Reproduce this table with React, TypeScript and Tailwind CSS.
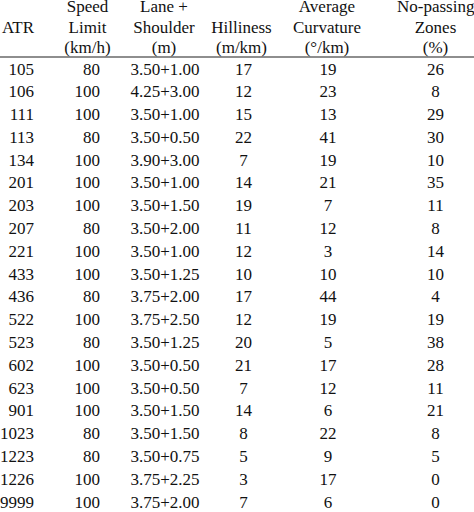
import React from 'react';

type Row = [string, string, string, string, string, string];

const rows: Row[] = [
  ['105', '80', '3.50+1.00', '17', '19', '26'],
  ['106', '100', '4.25+3.00', '12', '23', '8'],
  ['111', '100', '3.50+1.00', '15', '13', '29'],
  ['113', '80', '3.50+0.50', '22', '41', '30'],
  ['134', '100', '3.90+3.00', '7', '19', '10'],
  ['201', '100', '3.50+1.00', '14', '21', '35'],
  ['203', '100', '3.50+1.50', '19', '7', '11'],
  ['207', '80', '3.50+2.00', '11', '12', '8'],
  ['221', '100', '3.50+1.00', '12', '3', '14'],
  ['433', '100', '3.50+1.25', '10', '10', '10'],
  ['436', '80', '3.75+2.00', '17', '44', '4'],
  ['522', '100', '3.75+2.50', '12', '19', '19'],
  ['523', '80', '3.50+1.25', '20', '5', '38'],
  ['602', '100', '3.50+0.50', '21', '17', '28'],
  ['623', '100', '3.50+0.50', '7', '12', '11'],
  ['901', '100', '3.50+1.50', '14', '6', '21'],
  ['1023', '80', '3.50+1.50', '8', '22', '8'],
  ['1223', '80', '3.50+0.75', '5', '9', '5'],
  ['1226', '100', '3.75+2.25', '3', '17', '0'],
  ['9999', '100', '3.75+2.00', '7', '6', '0'],
];

const headers: string[][] = [
  ['', 'ATR', ''],
  ['Speed', 'Limit', '(km/h)'],
  ['Lane +', 'Shoulder', '(m)'],
  ['', 'Hilliness', '(m/km)'],
  ['Average', 'Curvature', '(°/km)'],
  ['No-passing', 'Zones', '(%)'],
];

// per-column alignment for header and body cells
const headCls = [
  'text-right pr-[19px]',
  'text-center pr-[4px]',
  'text-center',
  'text-center pr-[2px]',
  'text-center pr-[10px]',
  'text-center pl-[16px] whitespace-nowrap',
];

const bodyCls = [
  'text-right pr-[19px]',
  'text-right pr-[26px]',
  'text-center pl-[2px]',
  'text-center pl-[2px]',
  'text-center pr-[8px]',
  'text-center pl-[16px]',
];

const cols = 'grid grid-cols-[53px_73px_76px_81px_98px_93px]';

export default function App() {
  return (
    <div className="w-[474px] h-[512px] overflow-hidden bg-white text-[#111] text-[17px] [font-family:'Liberation_Serif',serif]">
      <div className={`${cols} -mt-[3px] leading-[20.5px]`}>
        {headers.map((lines, i) => (
          <div key={i} className={`flex flex-col ${headCls[i]}`}>
            {lines.map((l, j) => (
              <span key={j} className="h-[20.5px]">
                {l}
              </span>
            ))}
          </div>
        ))}
      </div>
      <div className="h-[2px] bg-[#8e8e8e] mt-[-3px]" />
      <div className="pt-[1px]">
        {rows.map((r, i) => (
          <div key={i} className={`${cols} h-[22.8px] leading-[22.8px]`}>
            {r.map((c, j) => (
              <div key={j} className={bodyCls[j]}>
                {c}
              </div>
            ))}
          </div>
        ))}
      </div>
    </div>
  );
}
